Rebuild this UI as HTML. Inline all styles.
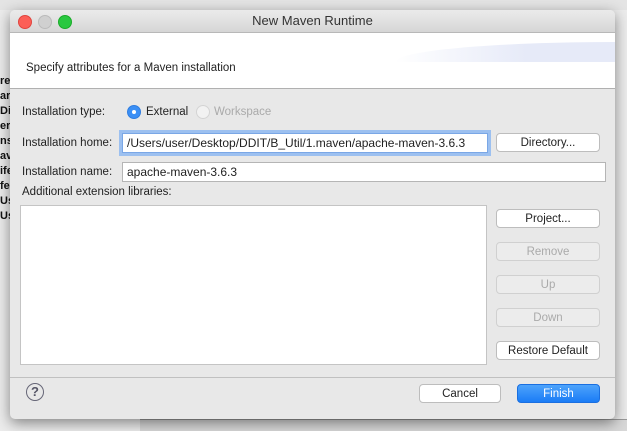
<!DOCTYPE html>
<html><head><style>
body{margin:0;width:627px;height:430px;overflow:hidden;background:#ececec;font-family:"Liberation Sans",sans-serif;font-size:11.5px;color:#222;position:relative}
.a{position:absolute}
.dlg{left:10px;top:10px;width:605px;height:409px;background:#e8e8e8;border-radius:5px;box-shadow:0 4px 14px rgba(0,0,0,.45);overflow:hidden}
.tb{left:0;top:0;width:605px;height:22px;background:linear-gradient(#ebebeb,#d6d6d6);border-bottom:1px solid #b8b8b8;text-align:center;line-height:22px;font-size:13px;color:#333}
.dot{width:12px;height:12px;border-radius:50%;top:5px}
.btn{box-sizing:border-box;background:#fff;border:1px solid #bdbdbd;border-radius:4px;height:19px;line-height:18px;text-align:center;font-size:11.5px;color:#222}
.dis{background:#ececec;color:#aaa;border-color:#d0d0d0}
.inp{background:#fff;border:1px solid #b5b5b5;height:18px;line-height:18px;padding-left:4px;font-size:12px}
</style></head><body>
<div class="a" style="left:0;top:0;width:627px;height:10px;background:#e4e4e4"></div>
<div class="a" style="left:0;top:74px;width:10px;height:160px;font-size:11px;line-height:15px;font-weight:bold;color:#111;overflow:hidden">rer<br>arc<br>Dis<br>err<br>ns<br>av<br>ife<br>fer<br>Us<br>Us</div>
<div class="a" style="left:140px;top:419px;width:487px;height:11px;background:#d8d8d8;border-top:1px solid #999"></div>
<div class="a dlg">
 <div class="a tb">New Maven Runtime</div>
 <div class="a dot" style="left:8px;background:#fc5f57;border:1px solid #e0443e"></div>
 <div class="a dot" style="left:28px;background:#d0d0d0;border:1px solid #bbb"></div>
 <div class="a dot" style="left:48px;background:#2ac840;border:1px solid #1aab29"></div>
 <div class="a" style="left:0;top:23px;width:605px;height:55px;background:#fff;border-bottom:1px solid #b0b0b0"></div>
 <div class="a" style="left:385px;top:32px;width:220px;height:20px;background:linear-gradient(90deg,rgba(235,238,250,0),#e6eaf8 60%);border-radius:100% 0 0 0/100% 0 0 0"></div>
 <div class="a" style="left:16px;top:52px;font-size:11.5px">Specify attributes for a Maven installation</div>
 <div class="a" style="left:12px;top:96px">Installation type:</div>
 <div class="a" style="left:117px;top:95px;width:12px;height:12px;border-radius:50%;background:#3b8ff5;border:1px solid #2f7de0"><div class="a" style="left:4px;top:4px;width:4px;height:4px;border-radius:50%;background:#fff"></div></div>
 <div class="a" style="left:136px;top:96px">External</div>
 <div class="a" style="left:186px;top:95px;width:12px;height:12px;border-radius:50%;background:#f2f2f2;border:1px solid #d4d4d4"></div>
 <div class="a" style="left:204px;top:96px;color:#aaa">Workspace</div>
 <div class="a" style="left:12px;top:127px">Installation home:</div>
 <div class="a inp" style="left:112px;top:123px;width:360px;box-shadow:0 0 0 3px #9cc0f0;border-color:#7aa7e6">/Users/user/Desktop/DDIT/B_Util/1.maven/apache-maven-3.6.3</div>
 <div class="a btn" style="left:486px;top:123px;width:104px">Directory...</div>
 <div class="a" style="left:12px;top:156px">Installation name:</div>
 <div class="a inp" style="left:112px;top:152px;width:478px">apache-maven-3.6.3</div>
 <div class="a" style="left:12px;top:176px">Additional extension libraries:</div>
 <div class="a" style="left:10px;top:195px;width:465px;height:158px;background:#fff;border:1px solid #c4c4c4"></div>
 <div class="a btn" style="left:486px;top:199px;width:104px">Project...</div>
 <div class="a btn dis" style="left:486px;top:232px;width:104px">Remove</div>
 <div class="a btn dis" style="left:486px;top:265px;width:104px">Up</div>
 <div class="a btn dis" style="left:486px;top:298px;width:104px">Down</div>
 <div class="a btn" style="left:486px;top:331px;width:104px">Restore Default</div>
 <div class="a" style="left:0;top:367px;width:605px;height:1px;background:#c0c0c0"></div>
 <div class="a" style="left:16px;top:373px;width:16px;height:16px;border:1.5px solid #667;border-radius:50%;text-align:center;line-height:16px;font-size:13px;font-weight:bold;color:#556">?</div>
 <div class="a btn" style="left:409px;top:374px;width:82px">Cancel</div>
 <div class="a btn" style="left:507px;top:374px;width:83px;background:linear-gradient(#4da3fb,#1a7cf6);border-color:#1a6fe0;color:#fff">Finish</div>
</div>
</body></html>
